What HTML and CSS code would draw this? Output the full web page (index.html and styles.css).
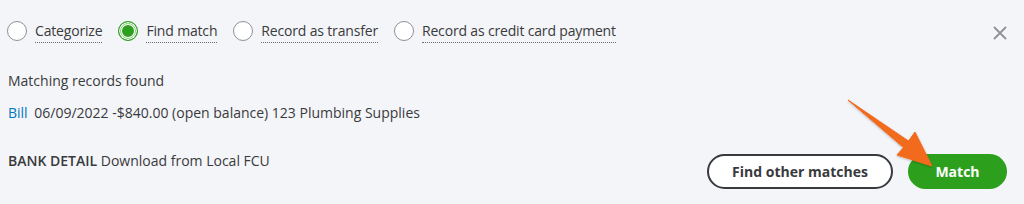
FILE: index.html
```html
<!DOCTYPE html>
<html>
<head>
<meta charset="utf-8">
<link rel="stylesheet" href="styles.css">
</head>
<body>
<div class="panel">
  <div class="options">
    <label class="opt"><span class="radio"></span><span class="opt-text">Categorize</span></label>
    <label class="opt"><span class="radio checked"></span><span class="opt-text">Find match</span></label>
    <label class="opt"><span class="radio"></span><span class="opt-text">Record as transfer</span></label>
    <label class="opt"><span class="radio"></span><span class="opt-text">Record as credit card payment</span></label>
    <span class="close">
      <svg width="14" height="14" viewBox="0 0 14 14"><path d="M1.5 1.5 L12.5 12.5 M12.5 1.5 L1.5 12.5" stroke="#8d9096" stroke-width="1.8" stroke-linecap="round"/></svg>
    </span>
  </div>
  <div class="heading">Matching records found</div>
  <div class="record"><span class="link">Bill</span> 06/09/2022 -$840.00 (open balance) 123 Plumbing Supplies</div>
  <div class="footer">
    <div class="bank"><span class="bank-label">BANK DETAIL</span> Download from Local FCU</div>
    <div class="actions">
      <button class="btn btn-secondary">Find other matches</button>
      <button class="btn btn-primary">Match</button>
    </div>
  </div>
  <svg class="arrow" width="1024" height="204" viewBox="0 0 1024 204">
    <defs>
      <filter id="sh" x="-20%" y="-20%" width="140%" height="140%">
        <feDropShadow dx="0" dy="1" stdDeviation="1.2" flood-color="#000" flood-opacity="0.25"/>
      </filter>
    </defs>
    <polygon points="848,100 908.5,141 915,132 932,166 897,155 903.5,147.5" fill="#f26a1b" stroke="#f26a1b" stroke-width="1" stroke-linejoin="round" filter="url(#sh)"/>
  </svg>
</div>
</body>
</html>
```

FILE: styles.css
```css
* { box-sizing: border-box; }
html, body { margin: 0; padding: 0; }
body {
  background: #f4f5f8;
  font-family: "Open Sans", "Liberation Sans", sans-serif;
  font-size: 14px;
  color: #393a3d;
  width: 1024px;
  height: 204px;
  overflow: hidden;
}
.panel {
  position: relative;
  height: 204px;
  padding: 20px 17px 0 7px;
}
.options {
  display: flex;
  align-items: center;
  height: 21px;
}
.opt {
  display: flex;
  align-items: center;
  margin-right: 16px;
}
.radio {
  width: 20px;
  height: 20px;
  border: 1px solid #8d9096;
  border-radius: 50%;
  background: #fff;
  margin-right: 8px;
  display: inline-block;
  position: relative;
}
.radio.checked {
  border-color: #2ca01c;
  border-width: 1px;
  box-shadow: inset 0 0 0 3px #fff;
  background: #2ca01c;
}
.radio.checked::before {
  content: "";
  position: absolute;
  inset: 1px;
  border-radius: 50%;
  border: 1px solid #8ccf80;
}
.opt-text {
  color: #393a3d;
  line-height: 20px;
  letter-spacing: -0.17px;
  border-bottom: 1px dotted #6b6c72;
  padding-bottom: 1px;
  margin-top: 3px;
}
.close {
  margin-left: auto;
  display: flex;
  align-items: center;
  margin-top: 5px;
}
.heading {
  margin-top: 30px;
  margin-left: 1px;
  line-height: 20px;
}
.record {
  margin-top: 12px;
  margin-left: 1px;
  line-height: 20px;
}
.link { color: #0077c5; margin-right: 3px; }
.footer {
  display: flex;
  align-items: flex-start;
  justify-content: space-between;
  margin-top: 28px;
}
.bank { margin-left: 1px; line-height: 20px; }
.bank-label { font-weight: 600; }
.actions {
  display: flex;
  gap: 15px;
  margin-top: 3px;
}
.btn {
  font-family: "Open Sans", "Liberation Sans", sans-serif;
  font-size: 14px;
  font-weight: 700;
  height: 35px;
  border-radius: 18px;
  cursor: pointer;
}
.btn-secondary {
  background: #fff;
  color: #393a3d;
  border: 2px solid #393a3d;
  width: 186px;
}
.btn-primary {
  background: #2ca01c;
  color: #fff;
  border: none;
  width: 99px;
}
.arrow {
  position: absolute;
  left: 0;
  top: 0;
  pointer-events: none;
}
```
